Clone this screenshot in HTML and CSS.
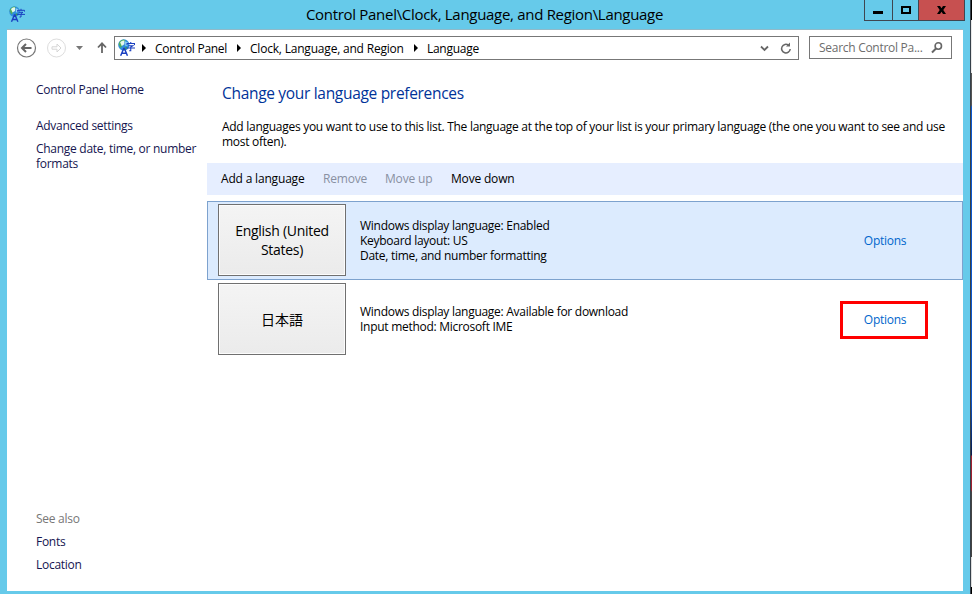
FILE: index.html
```
<!DOCTYPE html>
<html lang="en">
  <head>
    <meta charset="utf-8">
    <title>Control Panel\Clock, Language, and Region\Language</title>
    <link rel="stylesheet" href="styles.css">
  </head>

  <body>
    <svg class="defs" width="0" height="0">
      <symbol id="language-icon" viewBox="0 0 16 16">
        <circle cx="5.5" cy="5.6" r="5.3" fill="#2f8fdc"/>
        <path d="M.6 5Q1 1.5 5 .4L7 1.5 5 3.5 4 6 2.5 8.5Z" fill="#4fae5a"/>
        <path d="M2 3Q4 .8 6 1.5L6 5 3.5 6.5Z" fill="#e4f8ea"/>
        <path d="M6.5 2L9.5 3.5 9 6 7 6.5Z" fill="#8ed0f5"/>
        <path d="M6 8L8.5 7.5 7.5 10Z" fill="#3fa04b"/>
        <path d="M2.5 15.7L5.4 9H6L8.9 15.7M3.7 13.5H7.7" fill="none" stroke="#1a3fc0" stroke-width="1.4"/>
        <path d="M8.5 5.6V4.3H15.5V5.6M12 2.8V4.3M9.7 6.3H14L12 7.6V11H10.5M8 8.4H16" fill="none" stroke="#1a3fc0" stroke-width="1"/>
      </symbol>
    </svg>

    <div class="window">
      <header class="titlebar">
        <svg class="app-icon"><use href="#language-icon"/></svg>
        <h1 class="title">Control Panel\Clock, Language, and Region\Language</h1>
        <div class="controls">
          <button class="control"><svg width="27" height="20"><path d="M8 11H18V14H8Z"/></svg></button>
          <button class="control max"><svg width="25" height="20"><path d="M9 7H17V13H9Z" fill="none" stroke="#000" stroke-width="2"/></svg></button>
          <button class="control close"><svg width="45" height="20"><path d="M18 6H21L22.5 8.3 24 6H27L24.3 10 27 14H24L22.5 11.7 21 14H18L20.7 10Z"/></svg></button>
        </div>
      </header>

      <div class="client">
        <nav class="navbar">
          <svg class="nav-icons" width="107" height="30" fill="none">
            <circle cx="19.5" cy="18" r="9" stroke="#777" stroke-width="1.2"/>
            <path d="M24.5 18H15.5M19 14L15 18L19 22" stroke="#666" stroke-width="2"/>
            <circle cx="49.5" cy="18" r="9" stroke="#ddd"/>
            <path d="M45 16.8H50V14L54 18L50 22V19.2H45Z" stroke="#d5d5d5"/>
            <path d="M69 16H76L72.5 20Z" fill="#777"/>
            <path d="M95 23V13.5M91 17.5L95 13.3L99 17.5" stroke="#666" stroke-width="1.8"/>
          </svg>
          <div class="address">
            <svg class="address-icon"><use href="#language-icon"/></svg>
            <svg class="arrow" viewBox="0 0 5 8"><path d="M0 0L4 4L0 8Z"/></svg>
            <span class="crumb crumb-panel">Control Panel</span>
            <svg class="arrow" viewBox="0 0 5 8"><path d="M0 0L4 4L0 8Z"/></svg>
            <span class="crumb crumb-region">Clock, Language, and Region</span>
            <svg class="arrow" viewBox="0 0 5 8"><path d="M0 0L4 4L0 8Z"/></svg>
            <span class="crumb">Language</span>
            <svg class="address-actions" width="42" height="22" fill="none" stroke="#666">
              <path d="M5 9.5L8.5 13L12 9.5" stroke-width="1.8"/>
              <path d="M32.5 8.2A4.3 4.3 0 1 0 34.2 12" stroke-width="1.5"/>
              <path d="M30 9.5H34V5.5Z" fill="#666" stroke="none"/>
            </svg>
          </div>
          <div class="search">
            <span>Search Control Pa...</span>
            <svg width="14" height="14" fill="none" stroke="#666"><circle cx="8.3" cy="5" r="3.2" stroke-width="1.6"/><path d="M6 7.5L2 11.5" stroke-width="2"/></svg>
          </div>
        </nav>

        <div class="page">
          <aside class="sidebar">
            <a>Control Panel Home</a>
            <a class="advanced">Advanced settings</a>
            <a class="formats">Change date, time, or number<br>formats</a>
            <div class="see-also">
              <span>See also</span>
              <a>Fonts</a>
              <a>Location</a>
            </div>
          </aside>

          <main class="content">
            <h2>Change your language preferences</h2>
            <p class="intro">Add languages you want to use to this list. The language at the top of your list is your primary language (the one you want to see and use<br>most often).</p>
            <div class="toolbar">
              <span class="add">Add a language</span>
              <span class="remove disabled">Remove</span>
              <span class="up disabled">Move up</span>
              <span>Move down</span>
            </div>
            <div class="language selected">
              <div class="tile">English (United<br>States)</div>
              <div class="details">Windows display language: Enabled<br>Keyboard layout: US<br>Date, time, and number formatting</div>
              <a class="options">Options</a>
            </div>
            <div class="language">
              <div class="tile japanese" lang="ja">日本語</div>
              <div class="details download">Windows display language: Available for download<br>Input method: Microsoft IME</div>
              <a class="options marked">Options</a>
            </div>
          </main>
        </div>
      </div>
    </div>
    <div class="desktop-edge"></div>
  </body>
</html>
```
FILE: styles.css
```
* {box-sizing:border-box;}
body {margin:0; width:972px; height:594px; overflow:hidden; display:flex; font:12px/15px "Open Sans", "Noto Sans", sans-serif; letter-spacing:-0.28px; color:#000;}
.defs {position:absolute;}
.window {width:970px; height:594px; background:#66caea; padding:0 7px 3px;}
.desktop-edge {width:2px; background:linear-gradient(#000 20px, #e8e8e8 20px 73px, #555 73px 105px, #0b58d0 107px 400px, #071a4a 455px, #a02030 456px 490px, #444 492px 557px, #ddd 557px 587px, #000 587px); border-left:1px solid #35404a;}

.titlebar {height:29px; display:flex; align-items:flex-start; margin-right:-2px;}
.app-icon {width:16px; height:16px; margin:6px 0 0 2px;}
.title {flex:1; margin:4px 0 0 80px; font-size:15px; line-height:20px; font-weight:400; letter-spacing:-0.3px; text-align:center; white-space:nowrap;}
.controls {display:flex; height:21px; border:1px solid #3f4650; border-top:0;}
.control {padding:0; border:0; background:none; display:block; height:20px;}
.control svg {display:block;}
.max {border-left:1px solid #3f4650;}
.close {background:#c75050; border-left:1px solid #3f4650;}

.client {height:562px; background:#fff; border-top:1px solid #91bac9; display:flex; flex-direction:column;}
.navbar {height:36px; display:flex; flex:none;}
.nav-icons {display:block;}
.address {width:685px; height:24px; margin-top:6px; border:1px solid #777; display:flex; align-items:center;}
.address-icon {width:17px; height:17px; margin:0 7px 1px 3px;}
.arrow {width:5px; height:8px; margin-right:8px; flex:none;}
.crumb {white-space:nowrap; flex:none;}
.crumb-panel {width:82px;}
.crumb-region {width:164px; letter-spacing:-0.2px;}
.address-actions {margin-left:auto;}
.search {width:143px; height:23px; margin:6px 0 0 10px; border:1px solid #777; display:flex; align-items:center; justify-content:space-between; padding:0 7px 0 9px; color:#6d6d6d; white-space:nowrap;}

.page {display:flex; flex:1; min-height:0;}
.sidebar {width:200px; padding:16px 0 19px 29px; display:flex; flex-direction:column; color:#151550; white-space:nowrap; align-items:flex-start;}
.advanced {margin-top:21px;}
.formats {margin-top:8px;}
.see-also {margin-top:auto; display:flex; flex-direction:column; gap:8px; align-items:flex-start;}
.see-also span {color:#777;}

.content {width:756px;}
h2 {margin:16px 0 0 15px; font-size:15.5px; line-height:22px; font-weight:400; letter-spacing:-0.31px; color:#003399; white-space:nowrap;}
.intro {margin:15px 0 0 15px; white-space:nowrap;}
.toolbar {height:32px; margin-top:14px; padding:0 0 1px 14px; background:#e6eeff; display:flex; align-items:center; letter-spacing:-0.18px; white-space:nowrap;}
.add {width:102px;}
.remove {width:62px;}
.up {width:66px;}
.disabled {color:#8990a2;}
.language {height:79px; display:flex; align-items:center; border:1px solid transparent; padding-left:10px;}
.selected {margin-top:6px; background:#dcebfe; border-color:#7da2ce;}
.tile {width:128px; height:72px; margin-bottom:1px; border:1px solid #707070; background:linear-gradient(#f4f4f4, #ebebeb); box-shadow:inset 0 0 0 1px #fcfcfc; display:flex; align-items:center; justify-content:center; text-align:center; font-size:14px; line-height:19px;}
.japanese {font-family:"Noto Sans CJK JP", sans-serif; letter-spacing:0;}
.details {margin-left:14px; width:480px; white-space:nowrap;}
.download {padding-bottom:1px;}
.options {width:88px; height:38px; display:flex; align-items:center; justify-content:center; color:#0066cc; padding-left:2px;}
.marked {border:3px solid #f00;}
```
